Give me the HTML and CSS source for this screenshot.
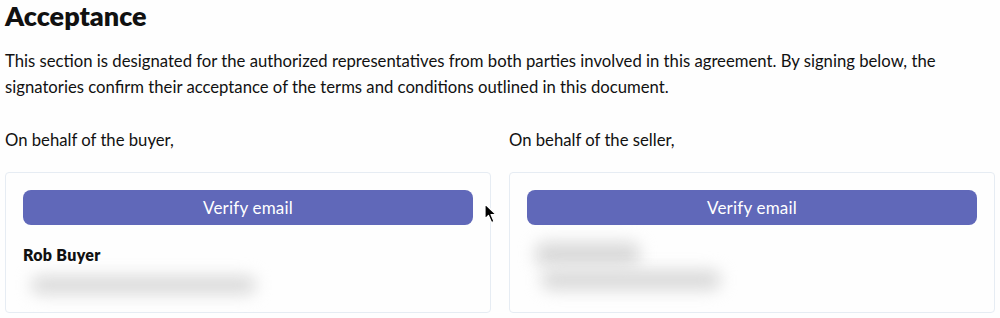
FILE: index.html
```html
<!DOCTYPE html>
<html>
<head>
<meta charset="utf-8">
<link rel="stylesheet" href="styles.css">
</head>
<body>
<div class="page">
  <h1 class="title">Acceptance</h1>
  <p class="intro">This section is designated for the authorized representatives from both parties involved in this agreement. By signing below, the signatories confirm their acceptance of the terms and conditions outlined in this document.</p>
  <div class="columns">
    <div class="col">
      <div class="label">On behalf of the buyer,</div>
      <div class="card">
        <button class="btn">Verify email</button>
        <div class="name">Rob Buyer</div>
        <div class="blur blur-email"></div>
      </div>
    </div>
    <div class="col">
      <div class="label">On behalf of the seller,</div>
      <div class="card">
        <button class="btn">Verify email</button>
        <div class="blur blur-name"></div>
        <div class="blur blur-email2"></div>
      </div>
    </div>
  </div>
  <svg class="cursor" width="14" height="22" viewBox="0 0 14 22"><path d="M1 1 L1 16 L4.5 12.5 L7.5 19.5 L10 18.5 L7 11.5 L12 11.5 Z" fill="#000" stroke="#fff" stroke-width="1.2" stroke-linejoin="round"/></svg>
</div>
</body>
</html>
```

FILE: styles.css
```css
html, body { margin: 0; padding: 0; background: #fefefe; }
body { font-family: Lato, "Noto Sans", sans-serif; color: #111; }
.page { position: relative; padding: 0 5px; width: 990px; }
.title { margin: 0; font-size: 27px; font-weight: 800; line-height: 32px; padding-top: 0; }
.intro { margin: 16px 0 0; font-size: 16.7px; line-height: 26px; }
.columns { display: grid; grid-template-columns: 486px 486px; column-gap: 18px; margin-top: 29px; }
.label { font-size: 16.7px; line-height: 22px; }
.card { margin-top: 21px; border: 1px solid #e6ecf3; border-radius: 4px; height: 141px; box-sizing: border-box; padding: 17px 17px 0; }
.btn { display: block; width: 100%; height: 35px; border: none; border-radius: 8px; background: #6068b9; color: #fff; font-family: inherit; font-size: 17px; font-weight: 400; letter-spacing: 0.2px; }
.name { margin-top: 20px; font-weight: 800; font-size: 16px; line-height: 20px; letter-spacing: 0.3px; }
.blur { background: #d9d9d9; filter: blur(8px); border-radius: 10px; }
.blur-email { margin-top: 11px; width: 225px; height: 18px; margin-left: 8px; }
.blur-name { margin-top: 17px; width: 105px; height: 24px; margin-left: 8px; }
.blur-email2 { margin-top: 4px; width: 180px; height: 20px; margin-left: 14px; }
.cursor { position: absolute; left: 484px; top: 203px; }
```
